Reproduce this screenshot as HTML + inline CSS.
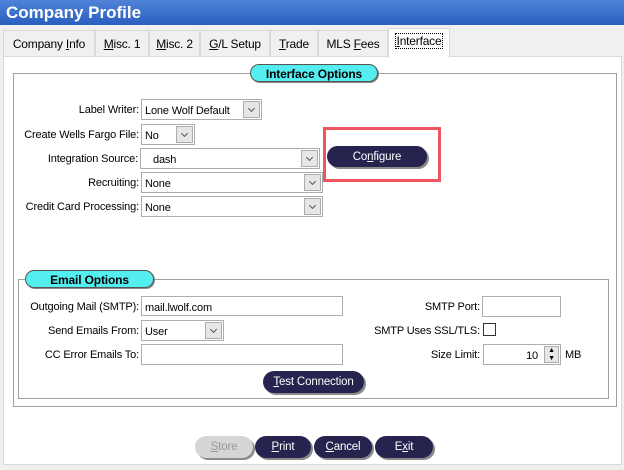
<!DOCTYPE html><html><head><style>
*{margin:0;padding:0;box-sizing:border-box}
body{width:624px;height:470px;background:#f0f0f0;font-family:"Liberation Sans",Arial,sans-serif;font-size:11px;letter-spacing:-0.15px;color:#000;position:relative;overflow:hidden}
.a{position:absolute}
.title{left:0;top:0;width:624px;height:25px;background:linear-gradient(#4f82d8,#2a5fbf);color:#fff;font-weight:bold;font-size:17px;letter-spacing:0;padding:3px 0 0 6px}
.tab{position:absolute;top:30px;height:26px;border:1px solid #d9d9d9;border-bottom:none;background:#f0f0f0;font-size:12px;letter-spacing:-0.2px;padding-top:6px;text-align:center}
.panel{left:3px;top:56px;width:619px;height:409px;background:#fff;border:1px solid #d9d9d9}
.box{border:1px solid #a0a0a0}
.pill{background:#55eef0;border:1px solid #555;border-radius:9px;font-weight:bold;font-size:12px;text-align:center;padding-top:2px;box-shadow:1px 1px 0 #888}
.lbl{text-align:right;white-space:nowrap;margin-top:1px}
.in{background:#fff;border:1px solid #adadad;padding:5px 3px 3px;white-space:nowrap}
.dd{position:absolute;right:1px;top:1px;bottom:1px;width:17px;background:#e6e6e6;border:1px solid #adadad}
.dd:after{content:"";position:absolute;left:5px;top:4px;width:4px;height:4px;border-right:1px solid #555;border-bottom:1px solid #555;transform:rotate(45deg)}
.btn{background:#26244f;color:#fff;border-radius:11px;text-align:center;padding-top:5px;box-shadow:2px 2px 0 #8a8a8a;font-size:11.5px}
</style></head><body>
<div class="a title">Company Profile</div>
<div class="tab" style="left:3px;width:92px">Company <u>I</u>nfo</div>
<div class="tab" style="left:95px;width:54px"><u>M</u>isc. 1</div>
<div class="tab" style="left:149px;width:51px"><u>M</u>isc. 2</div>
<div class="tab" style="left:200px;width:70px"><u>G</u>/L Setup</div>
<div class="tab" style="left:270px;width:48px"><u>T</u>rade</div>
<div class="tab" style="left:318px;width:70px">MLS <u>F</u>ees</div>
<div class="a panel"></div>
<div class="tab" style="left:388px;top:28px;height:30px;width:62px;background:#fff;padding-top:5px"><span style="border:1px dotted #000;padding:0 1px"><u>I</u>nterface</span></div>
<div class="a box" style="left:13px;top:73px;width:604px;height:334px"></div>
<div class="a pill" style="left:250px;top:64px;width:128px;height:18px">Interface Options</div>
<div class="a lbl" style="left:0;width:139px;top:103px">Label Writer:</div>
<div class="a in" style="left:141px;top:99px;width:121px;height:21px">Lone Wolf Default<div class="dd"></div></div>
<div class="a lbl" style="left:0;width:139px;top:128px">Create Wells Fargo File:</div>
<div class="a in" style="left:141px;top:124px;width:54px;height:21px">No<div class="dd"></div></div>
<div class="a lbl" style="left:0;width:138px;top:152px">Integration Source:</div>
<div class="a in" style="left:140px;top:148px;width:180px;height:21px;padding-left:12px">dash<div class="dd"></div></div>
<div class="a lbl" style="left:0;width:139px;top:176px">Recruiting:</div>
<div class="a in" style="left:141px;top:172px;width:182px;height:21px">None<div class="dd"></div></div>
<div class="a lbl" style="left:0;width:139px;top:200px">Credit Card Processing:</div>
<div class="a in" style="left:141px;top:196px;width:182px;height:21px">None<div class="dd"></div></div>
<div class="a btn" style="left:327px;top:146px;width:100px;height:21px">Co<u>n</u>figure</div>
<div class="a" style="left:323px;top:127px;width:118px;height:55px;border:3px solid #ee5560"></div>
<div class="a box" style="left:18px;top:279px;width:591px;height:120px"></div>
<div class="a pill" style="left:25px;top:270px;width:129px;height:18px">Email Options</div>
<div class="a lbl" style="left:0;width:139px;top:300px">Outgoing Mail (SMTP):</div>
<div class="a in" style="left:141px;top:296px;width:202px;height:20px">mail.lwolf.com</div>
<div class="a lbl" style="left:0;width:139px;top:324px">Send Emails From:</div>
<div class="a in" style="left:141px;top:320px;width:83px;height:21px">User<div class="dd"></div></div>
<div class="a lbl" style="left:0;width:139px;top:348px">CC Error Emails To:</div>
<div class="a in" style="left:141px;top:344px;width:202px;height:21px"></div>
<div class="a lbl" style="left:300px;width:180px;top:300px">SMTP Port:</div>
<div class="a in" style="left:482px;top:296px;width:79px;height:21px"></div>
<div class="a lbl" style="left:300px;width:180px;top:324px">SMTP Uses SSL/TLS:</div>
<div class="a" style="left:483px;top:323px;width:13px;height:13px;border:1px solid #333;background:#fff"></div>
<div class="a lbl" style="left:300px;width:180px;top:348px">Size Limit:</div>
<div class="a in" style="left:483px;top:344px;width:78px;height:21px;text-align:right;padding-right:22px">10
<div class="a" style="right:1px;top:1px;width:15px;height:17px;background:#e6e6e6;border:1px solid #adadad;font-size:7px;line-height:8px;text-align:center">▲<br>▼</div></div>
<div class="a" style="left:565px;top:349px">MB</div>
<div class="a btn" style="left:263px;top:371px;width:101px;height:22px"><u>T</u>est Connection</div>
<div class="a btn" style="left:195px;top:436px;width:58px;height:22px;background:#d6d6d6;color:#999"><u>S</u>tore</div>
<div class="a btn" style="left:255px;top:436px;width:56px;height:22px"><u>P</u>rint</div>
<div class="a btn" style="left:314px;top:436px;width:58px;height:22px"><u>C</u>ancel</div>
<div class="a btn" style="left:375px;top:436px;width:58px;height:22px">E<u>x</u>it</div>
</body></html>
